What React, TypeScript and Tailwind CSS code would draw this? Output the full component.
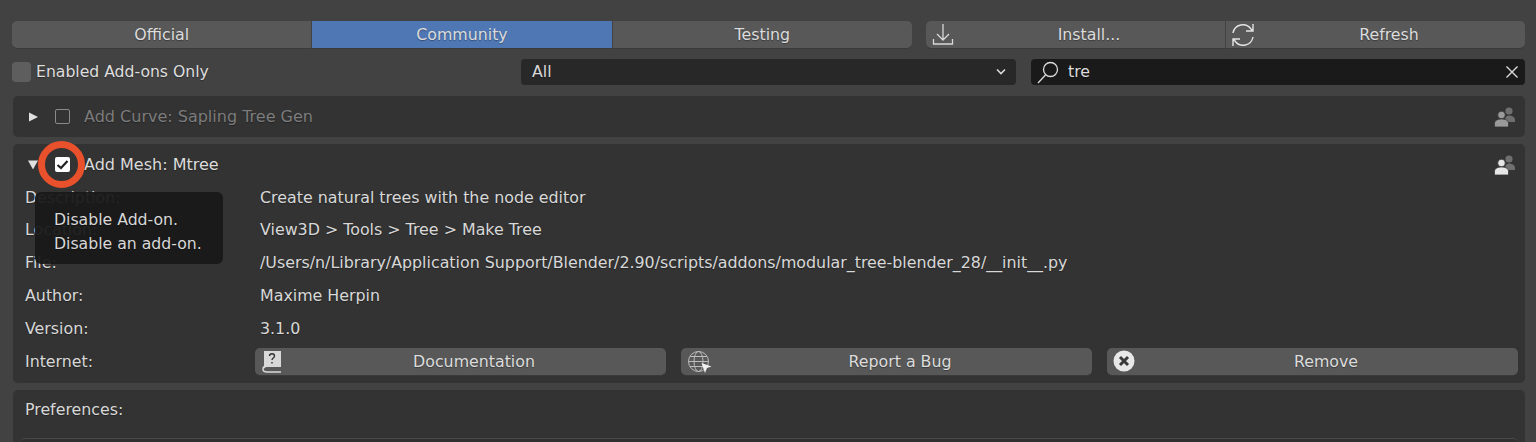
import React from "react";

const btn = "flex h-[27px] items-center justify-center text-[#dcdcdc] shadow-[0_1px_0_#3a3a3a]";

function People({ bright }: { bright?: boolean }) {
  return (
    <svg width="22" height="22" viewBox="0 0 22 22" className="shrink-0">
      <circle cx="15" cy="5" r="3.600" fill="#6f6f6f" />
      <path d="M11 14c0-3 2-4.500 4-4.500s6 1 6 4.500v2h-10z" fill="#6f6f6f" />
      <circle cx="7.500" cy="9" r="3.800" fill={bright ? "#e6e6e6" : "#9a9a9a"} stroke="#333" strokeWidth="0.800" />
      <path d="M0.500 21v-3.500c0-3 3-4.500 7-4.500s7 1.500 7 4.500v3.500z" fill={bright ? "#e6e6e6" : "#9a9a9a"} stroke="#333" strokeWidth="0.800" />
    </svg>
  );
}

function Row({ label, value }: { label: string; value: string }) {
  return (
    <div className="flex h-[32.800px] items-center text-[15.850px] text-[#d8d8d8]">
      <span className="w-[235px]">{label}</span>
      <span>{value}</span>
    </div>
  );
}

function LinkButton({ icon, label }: { icon: React.ReactNode; label: string }) {
  return (
    <div className={"relative flex-1 rounded-[5px] bg-[#585858] pl-[27px] " + btn}>
      <span className="absolute left-[6px] top-[2px]">{icon}</span>
      {label}
    </div>
  );
}

export default function App() {
  return (
    <div className="h-[442px] w-[1536px] overflow-hidden bg-[#424242] pt-[21px] font-['DejaVu_Sans',sans-serif] text-[15.800px] [text-shadow:0_1px_1px_#00000055]">
      {/* top tabs */}
      <div className="flex pl-[12px] pr-[11px]">
        <div className="flex w-[900px] gap-[1px]">
          <div className={"flex-1 rounded-l-[5px] bg-[#585858] " + btn}>Official</div>
          <div className={"flex-1 bg-[#4f77b3] " + btn}>Community</div>
          <div className={"flex-1 rounded-r-[5px] bg-[#585858] " + btn}>Testing</div>
        </div>
        <div className="ml-[14px] flex flex-1 gap-[1px]">
          <div className={"relative flex-1 rounded-l-[5px] bg-[#585858] pl-[27px] " + btn}>
            <svg width="22" height="24" viewBox="0 0 22 24" fill="none" stroke="#d8d8d8" strokeWidth="1.300" className="absolute left-[6px] top-[2px]">
              <path d="M11 1v16M5 11l6 6 6-6M1.500 16v5h19v-5" />
            </svg>
            Install...
          </div>
          <div className={"relative flex-1 rounded-r-[5px] bg-[#585858] pl-[27px] " + btn}>
            <svg width="24" height="24" viewBox="0 0 24 24" fill="none" stroke="#e4e4e4" strokeWidth="1.400" className="absolute left-[5px] top-[2px]">
              <path d="M2 10a10 10 0 0 1 18-4l2 2M22 1v7h-7M22 14a10 10 0 0 1-18 4l-2-2M2 23v-7h7" />
            </svg>
            Refresh
          </div>
        </div>
      </div>

      {/* filter row */}
      <div className="mt-[10px] flex h-[27px] items-center pl-[12px] pr-[11px]">
        <div className="h-[20px] w-[19px] rounded-[4px] bg-[#5e5e5e]" />
        <span className="ml-[5px] w-[485px] text-[15.650px] text-[#dedede]">Enabled Add-ons Only</span>
        <div className="flex h-[26px] w-[495px] items-center justify-between rounded-[4px] bg-[#282828] pl-[11px] pr-[9px] text-[#d8d8d8]">
          All
          <svg width="12" height="8" viewBox="0 0 12 8" fill="none" stroke="#d8d8d8" strokeWidth="1.600">
            <path d="M2 1.500l4 4 4-4" />
          </svg>
        </div>
        <div className="ml-[15px] flex h-[26px] flex-1 items-center rounded-[4px] bg-[#1a1a1a] pl-[5px] pr-[5px] text-[#dcdcdc]">
          <svg width="24" height="24" viewBox="0 0 24 24" fill="none" stroke="#dcdcdc" strokeWidth="1.300">
            <circle cx="14.500" cy="9.500" r="7" />
            <path d="M9.500 15L2 23" />
          </svg>
          <span className="ml-[8px]">tre</span>
          <svg width="16" height="16" viewBox="0 0 16 16" fill="none" stroke="#dcdcdc" strokeWidth="1.400" className="ml-auto">
            <path d="M2.500 2.500l11 11M13.500 2.500l-11 11" />
          </svg>
        </div>
      </div>

      {/* collapsed add-on */}
      <div className="ml-[13px] mr-[11px] mt-[11px] flex h-[41px] items-center rounded-[5px] bg-[#333333] pr-[9px]">
        <svg width="10" height="10" viewBox="0 0 10 10" className="ml-[16px]">
          <path d="M0 0.500l9 4.500-9 4.500z" fill="#e0e0e0" />
        </svg>
        <div className="ml-[16px] h-[15px] w-[15px] rounded-[2px] border border-[#8a8a8a]" />
        <span className="ml-[14px] text-[16px] text-[#7c7c7c]">Add Curve: Sapling Tree Gen</span>
        <span className="ml-auto">
          <People />
        </span>
      </div>

      {/* expanded add-on */}
      <div className="relative ml-[13px] mr-[11px] mt-[7px] h-[239px] rounded-[5px] bg-[#333333] pl-[12px] pr-[7px]">
        <div className="flex h-[41px] items-center">
          <svg width="10" height="10" viewBox="0 0 10 10" className="ml-[3px]">
            <path d="M0 0.500l5 9 5-9z" fill="#e0e0e0" />
          </svg>
          <div className="ml-[17px] flex h-[15px] w-[15px] items-center justify-center rounded-[2px] bg-white">
            <svg width="13" height="11" viewBox="0 0 13 11" fill="none" stroke="#222" strokeWidth="2.200">
              <path d="M1.500 6l3.500 3 6.500-7" />
            </svg>
          </div>
          <span className="ml-[14px] text-[16px] text-[#dcdcdc]">Add Mesh: Mtree</span>
          <span className="ml-auto mr-[2px]">
            <People bright />
          </span>
        </div>
        <div className="-mt-[4px]">
          <Row label="Description:" value="Create natural trees with the node editor" />
          <Row label="Location:" value="View3D > Tools > Tree > Make Tree" />
          <Row label="File:" value="/Users/n/Library/Application Support/Blender/2.90/scripts/addons/modular_tree-blender_28/__init__.py" />
          <Row label="Author:" value="Maxime Herpin" />
          <Row label="Version:" value="3.1.0" />
          <div className="flex h-[33px] items-center text-[#d8d8d8]">
            <span className="w-[230px]">Internet:</span>
            <div className="flex flex-1 gap-[15px]">
              <LinkButton
                label="Documentation"
                icon={
                  <svg width="22" height="23" viewBox="0 0 22 23">
                    <path d="M3 1h17v16H6c-2 0-3 1-3 2z" fill="#d8d8d8" />
                    <path d="M2 19c0-2 1-3 4-3M2 19c0 2 1 3 4 3h14" fill="none" stroke="#d8d8d8" strokeWidth="1.500" />
                    <path d="M8.500 6c0-3 5-3 5 0 0 2-2.500 2-2.500 4M11 12v1.500" fill="none" stroke="#333" strokeWidth="1.400" />
                  </svg>
                }
              />
              <LinkButton
                label="Report a Bug"
                icon={
                  <svg width="26" height="25" viewBox="0 0 26 25" fill="none" stroke="#bdbdbd" strokeWidth="1">
                    <circle cx="11.500" cy="11.500" r="10" />
                    <ellipse cx="11.500" cy="11.500" rx="4.500" ry="10" />
                    <path d="M1.500 11.500h20M3 6.500h17M3 16.500h17" />
                    <path d="M14.500 13l10 3.500-4.500 1.500-2 5z" fill="#f0f0f0" stroke="none" />
                  </svg>
                }
              />
              <LinkButton
                label="Remove"
                icon={
                  <svg width="22" height="22" viewBox="0 0 22 22">
                    <circle cx="11" cy="11" r="10.500" fill="#e8e8e8" />
                    <path d="M7 7l8 8M15 7l-8 8" stroke="#3a3a3a" strokeWidth="3" />
                  </svg>
                }
              />
            </div>
          </div>
        </div>

        {/* tooltip over the rows */}
        <div className="absolute left-[22px] top-[48px] h-[72px] w-[188px] whitespace-nowrap rounded-[6px] bg-[#191919]/95 pl-[19px] pt-[16px] text-[15.700px] leading-[24px] text-[#d8d8d8]">
          <p>Disable Add-on.</p>
          <p>Disable an add-on.</p>
        </div>
        <div className="absolute left-[25px] top-[-3px] h-[47px] w-[47px] rounded-full border-[7px] border-[#e8512c]" />
      </div>

      {/* preferences */}
      <div className="ml-[13px] mr-[11px] mt-[7px] h-[60px] rounded-t-[5px] bg-[#333333] px-[12px] pt-[10px]">
        <div className="leading-[19px] text-[#d8d8d8]">Preferences:</div>
        <div className="-mx-[5px] mt-[19px] h-[20px] rounded-t-[5px] border-t border-[#484848] bg-[#303030]" />
      </div>
    </div>
  );
}
